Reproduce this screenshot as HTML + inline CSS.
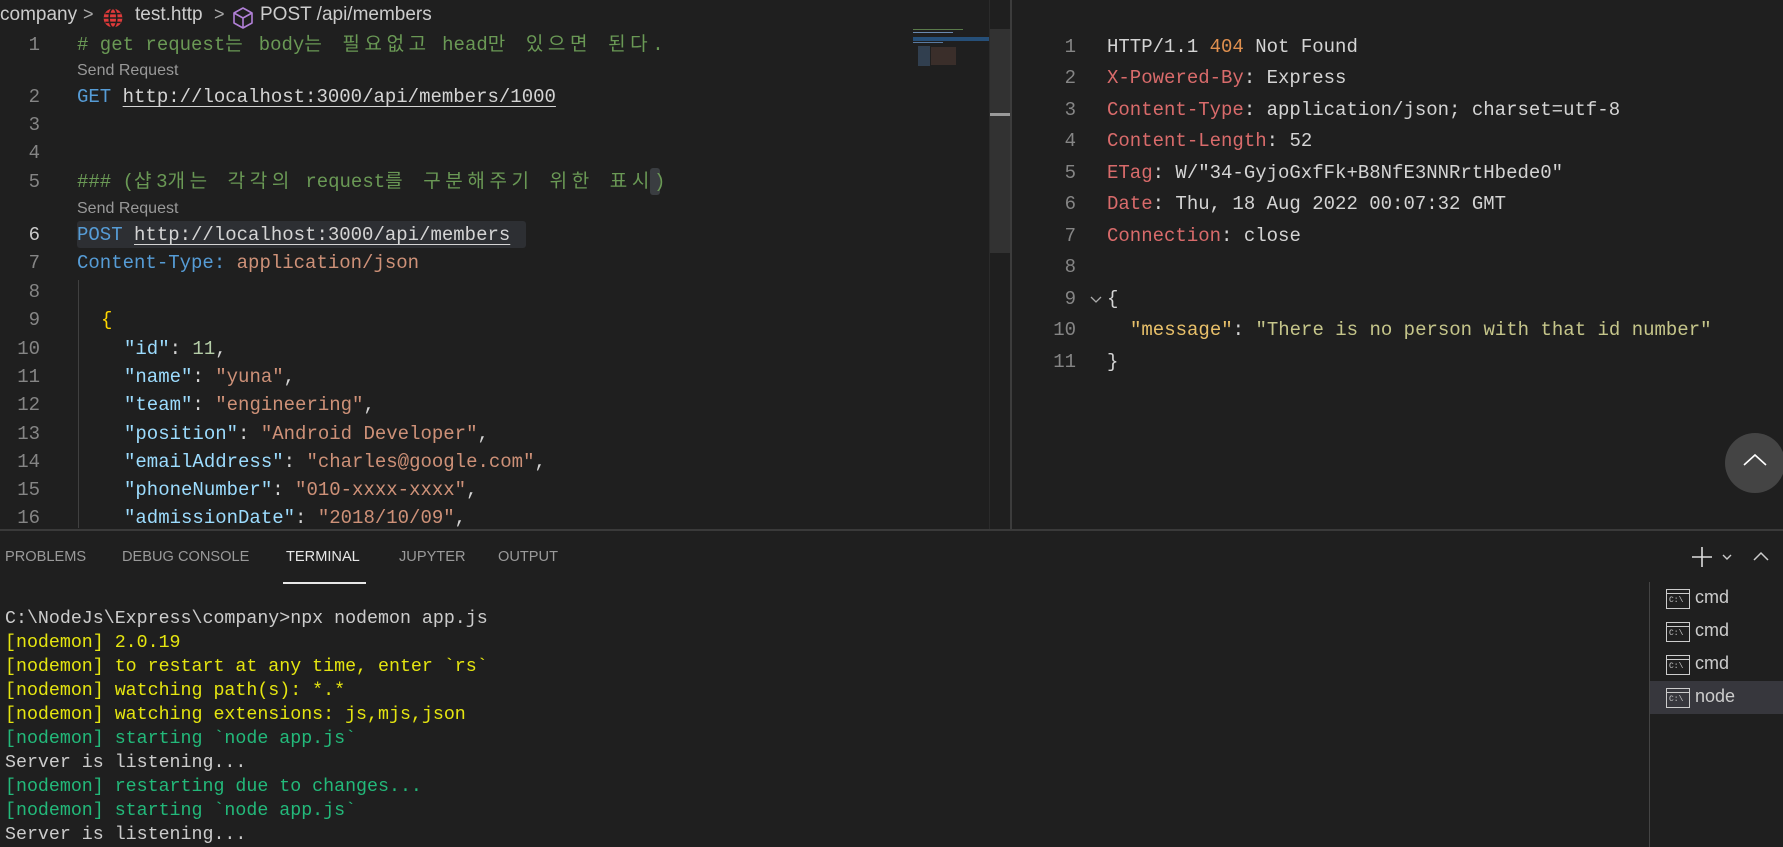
<!DOCTYPE html>
<html><head><meta charset="utf-8"><style>
*{margin:0;padding:0;box-sizing:border-box}
body{width:1783px;height:847px;background:#1f1f1f;position:relative;overflow:hidden;font-family:"Liberation Sans","Noto Sans CJK KR",sans-serif;color:#ccc}
.a{position:absolute;white-space:pre}
.m{font-family:"Liberation Mono","Noto Sans CJK KR",monospace;font-size:19px;line-height:28px;height:28px}
.ko{letter-spacing:4.6px}
.ln{position:absolute;width:40px;text-align:right;color:#858585}
.c{color:#6a9955}.k{color:#569cd6}.u{color:#d4d4d4;text-decoration:underline;text-underline-offset:4px}
.s{color:#ce9178}.key{color:#9cdcfe}.n{color:#b5cea8}.y{color:#ffd700}.w{color:#d4d4d4}
.cl{font-family:"Liberation Sans",sans-serif;font-size:16px;color:#999;line-height:26px}
.h{color:#d96b6b}.rv{color:#d4d4d4}
.t{font-family:"Liberation Mono",monospace;font-size:18.3px;line-height:24px}
.ty{color:#e5e510}.tg{color:#23b97a}.tw{color:#ccc}
.tab{position:absolute;top:549px;font-size:14.6px;color:#9a9a9a}
.it{position:absolute;left:1695px;font-size:18px;color:#ccc}
.ic{position:absolute;left:1666px;width:24px;height:20px;border:1.5px solid #ccc;font-size:8px;color:#ccc;line-height:10px;padding-top:6px;padding-left:2px;font-family:"Liberation Mono",monospace}
.ic:before{content:"";position:absolute;left:0;right:0;top:3px;border-top:1.5px solid #ccc}
</style></head><body>
<!-- breadcrumb -->
<div class="a" style="left:0;top:4px;font-size:19px;color:#ccc">company</div>
<div class="a" style="left:83px;top:4px;font-size:18px;color:#aaa">&gt;</div>
<svg class="a" style="left:102px;top:7px" width="22" height="22" viewBox="0 0 20 20"><circle cx="10" cy="10" r="8.5" fill="#e03a3a"/><g stroke="#1f1f1f" stroke-width="1.4" fill="none"><ellipse cx="10" cy="10" rx="3.5" ry="8.5"/><line x1="1.5" y1="10" x2="18.5" y2="10"/><line x1="3" y1="6" x2="17" y2="6"/><line x1="3" y1="14" x2="17" y2="14"/></g></svg>
<div class="a" style="left:135px;top:4px;font-size:19px;color:#ccc">test.http</div>
<div class="a" style="left:214px;top:4px;font-size:18px;color:#aaa">&gt;</div>
<svg class="a" style="left:232px;top:6px" width="22" height="24" viewBox="0 0 22 24"><g stroke="#b180d7" stroke-width="1.6" fill="none" stroke-linejoin="round"><path d="M11 2 L20 7 L20 17 L11 22 L2 17 L2 7 Z"/><path d="M2 7 L11 12 L20 7 M11 12 L11 22"/></g></svg>
<div class="a" style="left:260px;top:4px;font-size:19px;color:#ccc">POST /api/members</div>

<!-- left editor -->
<div class="a" style="left:77px;top:221px;width:449px;height:27px;background:#2d2f33;border-radius:3px"></div>
<div class="a" style="left:650px;top:168px;width:10px;height:27px;background:#3a3d41;border-radius:3px"></div>
<div class="a" style="left:78px;top:280px;width:1px;height:248px;background:#404040"></div>
<div class="a m" style="top:31px;left:0;width:900px"><span class="ln">1</span><span class="a c" style="left:77px"># get request<span class="ko">는</span> body<span class="ko">는 필요없고</span> head<span class="ko">만 있으면 된다</span>.</span></div>
<div class="a cl" style="top:58px;left:77px">Send Request</div>
<div class="a m" style="top:83px;left:0;width:900px"><span class="ln">2</span><span class="a" style="left:77px"><span class="k">GET</span> <span class="u">http://localhost:3000/api/members/1000</span></span></div>
<div class="a m" style="top:111px;left:0"><span class="ln">3</span></div>
<div class="a m" style="top:139px;left:0"><span class="ln">4</span></div>
<div class="a m" style="top:168px;left:0;width:900px"><span class="ln">5</span><span class="a c" style="left:77px">### (<span class="ko">샵</span>3<span class="ko">개는 각각의</span> request<span class="ko">를 구분해주기 위한 표시</span>)</span></div>
<div class="a cl" style="top:196px;left:77px">Send Request</div>
<div class="a m" style="top:221px;left:0;width:900px"><span class="ln" style="color:#ccc">6</span><span class="a" style="left:77px"><span class="k">POST</span> <span class="u">http://localhost:3000/api/members</span></span></div>
<div class="a m" style="top:249px;left:0;width:900px"><span class="ln">7</span><span class="a" style="left:77px"><span class="k">Content-Type:</span> <span class="s">application/json</span></span></div>
<div class="a m" style="top:278px;left:0"><span class="ln">8</span></div>
<div class="a m" style="top:306px;left:0;width:900px"><span class="ln">9</span><span class="a y" style="left:101px">{</span></div>
<div class="a m" style="top:335px;left:0;width:900px"><span class="ln">10</span><span class="a" style="left:124px"><span class="key">"id"</span><span class="w">: </span><span class="n">11</span><span class="w">,</span></span></div>
<div class="a m" style="top:363px;left:0;width:900px"><span class="ln">11</span><span class="a" style="left:124px"><span class="key">"name"</span><span class="w">: </span><span class="s">"yuna"</span><span class="w">,</span></span></div>
<div class="a m" style="top:391px;left:0;width:900px"><span class="ln">12</span><span class="a" style="left:124px"><span class="key">"team"</span><span class="w">: </span><span class="s">"engineering"</span><span class="w">,</span></span></div>
<div class="a m" style="top:420px;left:0;width:900px"><span class="ln">13</span><span class="a" style="left:124px"><span class="key">"position"</span><span class="w">: </span><span class="s">"Android Developer"</span><span class="w">,</span></span></div>
<div class="a m" style="top:448px;left:0;width:900px"><span class="ln">14</span><span class="a" style="left:124px"><span class="key">"emailAddress"</span><span class="w">: </span><span class="s">"charles@google.com"</span><span class="w">,</span></span></div>
<div class="a m" style="top:476px;left:0;width:900px"><span class="ln">15</span><span class="a" style="left:124px"><span class="key">"phoneNumber"</span><span class="w">: </span><span class="s">"010-xxxx-xxxx"</span><span class="w">,</span></span></div>
<div class="a m" style="top:504px;left:0;width:900px;height:26px;overflow:hidden"><span class="ln">16</span><span class="a" style="left:124px"><span class="key">"admissionDate"</span><span class="w">: </span><span class="s">"2018/10/09"</span><span class="w">,</span></span></div>

<!-- minimap -->
<div class="a" style="left:913px;top:29px;width:50px;height:1px;background:#5a7a4a"></div>
<div class="a" style="left:913px;top:32px;width:40px;height:1px;background:#6a8ab0"></div>
<div class="a" style="left:913px;top:37px;width:77px;height:4px;background:#264f78"></div>
<div class="a" style="left:913px;top:42px;width:30px;height:1px;background:#5a7aa0"></div>
<div class="a" style="left:918px;top:46px;width:12px;height:20px;background:#3e5570;opacity:.6"></div>
<div class="a" style="left:931px;top:47px;width:25px;height:18px;background:#6e4a3e;opacity:.35"></div>
<!-- scrollbar -->
<div class="a" style="left:989px;top:29px;width:21px;height:224px;background:#323232"></div>
<div class="a" style="left:989px;top:0;width:1px;height:530px;background:#2b2b2b"></div>
<div class="a" style="left:990px;top:113px;width:20px;height:3px;background:#9a9a9a"></div>
<div class="a" style="left:1010px;top:0;width:2px;height:530px;background:#3c3c3c"></div>

<!-- right editor -->
<div class="a m" style="left:1036px;top:33px"><span class="ln">1</span><span class="a rv" style="left:71px">HTTP/1.1 <span style="color:#e0904f">404</span> Not Found</span></div>
<div class="a m" style="left:1036px;top:64px"><span class="ln">2</span><span class="a rv" style="left:71px"><span class="h">X-Powered-By</span>: Express</span></div>
<div class="a m" style="left:1036px;top:96px"><span class="ln">3</span><span class="a rv" style="left:71px"><span class="h">Content-Type</span>: application/json; charset=utf-8</span></div>
<div class="a m" style="left:1036px;top:127px"><span class="ln">4</span><span class="a rv" style="left:71px"><span class="h">Content-Length</span>: 52</span></div>
<div class="a m" style="left:1036px;top:159px"><span class="ln">5</span><span class="a rv" style="left:71px"><span class="h">ETag</span>: W/"34-GyjoGxfFk+B8NfE3NNRrtHbede0"</span></div>
<div class="a m" style="left:1036px;top:190px"><span class="ln">6</span><span class="a rv" style="left:71px"><span class="h">Date</span>: Thu, 18 Aug 2022 00:07:32 GMT</span></div>
<div class="a m" style="left:1036px;top:222px"><span class="ln">7</span><span class="a rv" style="left:71px"><span class="h">Connection</span>: close</span></div>
<div class="a m" style="left:1036px;top:253px"><span class="ln">8</span></div>
<div class="a m" style="left:1036px;top:285px"><span class="ln">9</span><span class="a rv" style="left:71px">{</span></div>
<svg class="a" style="left:1089px;top:295px" width="14" height="10"><path d="M2 2 L7 7 L12 2" stroke="#aaa" stroke-width="1.3" fill="none"/></svg>
<div class="a m" style="left:1036px;top:316px"><span class="ln">10</span><span class="a rv" style="left:94px"><span style="color:#e8c06a">"message"</span>: <span style="color:#c5c58a">"There is no person with that id number"</span></span></div>
<div class="a m" style="left:1036px;top:348px"><span class="ln">11</span><span class="a rv" style="left:71px">}</span></div>

<!-- scroll-up button -->
<div class="a" style="left:1725px;top:433px;width:60px;height:60px;border-radius:50%;background:#444"></div>
<svg class="a" style="left:1742px;top:452px" width="26" height="16"><path d="M2 13 L13 3 L24 13" stroke="#fff" stroke-width="1.6" fill="none"/></svg>

<!-- panel -->
<div class="a" style="left:0;top:529px;width:1783px;height:2px;background:#3a3a3a"></div>
<div class="tab" style="left:5px">PROBLEMS</div>
<div class="tab" style="left:122px">DEBUG CONSOLE</div>
<div class="tab" style="left:286px;color:#e7e7e7">TERMINAL</div>
<div class="tab" style="left:399px">JUPYTER</div>
<div class="tab" style="left:498px">OUTPUT</div>
<div class="a" style="left:283px;top:582px;width:83px;height:2px;background:#e7e7e7"></div>
<svg class="a" style="left:1690px;top:545px" width="80" height="24"><path d="M12 2 V22 M2 12 H22" stroke="#ddd" stroke-width="1.6"/><path d="M33 10 L37 14 L41 10" stroke="#ccc" stroke-width="1.4" fill="none"/><path d="M64 15 L71 8 L78 15" stroke="#ccc" stroke-width="1.5" fill="none"/></svg>

<div class="a t tw" style="left:5px;top:607px">C:\NodeJs\Express\company&gt;npx nodemon app.js</div>
<div class="a t ty" style="left:5px;top:631px">[nodemon] 2.0.19</div>
<div class="a t ty" style="left:5px;top:655px">[nodemon] to restart at any time, enter `rs`</div>
<div class="a t ty" style="left:5px;top:679px">[nodemon] watching path(s): *.*</div>
<div class="a t ty" style="left:5px;top:703px">[nodemon] watching extensions: js,mjs,json</div>
<div class="a t tg" style="left:5px;top:727px">[nodemon] starting `node app.js`</div>
<div class="a t tw" style="left:5px;top:751px">Server is listening...</div>
<div class="a t tg" style="left:5px;top:775px">[nodemon] restarting due to changes...</div>
<div class="a t tg" style="left:5px;top:799px">[nodemon] starting `node app.js`</div>
<div class="a t tw" style="left:5px;top:823px">Server is listening...</div>

<div class="a" style="left:1649px;top:582px;width:1px;height:265px;background:#444"></div>
<div class="a" style="left:1650px;top:681px;width:133px;height:33px;background:#37373d"></div>
<div class="ic" style="top:589px">C:\</div><div class="it" style="top:587px">cmd</div>
<div class="ic" style="top:622px">C:\</div><div class="it" style="top:620px">cmd</div>
<div class="ic" style="top:655px">C:\</div><div class="it" style="top:653px">cmd</div>
<div class="ic" style="top:688px">C:\</div><div class="it" style="top:686px">node</div>
</body></html>
